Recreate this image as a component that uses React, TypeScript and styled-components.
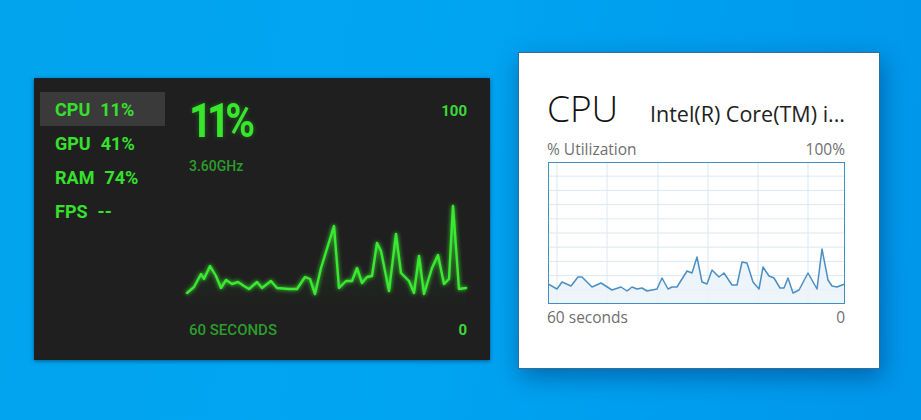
import React from "react";
import styled, { createGlobalStyle } from "styled-components";

const Global = createGlobalStyle`
  html, body { margin: 0; padding: 0; }
  body {
    width: 921px;
    height: 420px;
    overflow: hidden;
    background: linear-gradient(100deg, #03a4ee 0%, #00a5f1 45%, #0096ea 100%);
  }
  #root { height: 420px; }
`;

const Desktop = styled.div`
  display: flex;
  align-items: flex-start;
  gap: 28px;
  padding: 52px 0 0 34px;
  height: 420px;
  box-sizing: border-box;
`;

/* ---------- Dark (Razer-like) overlay ---------- */

const DarkPanel = styled.div`
  margin-top: 26px;
  width: 456px;
  height: 282px;
  background: #1f1f1f;
  box-shadow: 0 1px 4px rgba(0, 30, 60, 0.55);
  border-top: 1px solid #0f2733;
  box-sizing: border-box;
  display: flex;
  font-family: Roboto, "Liberation Sans", sans-serif;
  font-weight: 700;
`;

const Sidebar = styled.div`
  width: 154px;
  padding: 13px 0 0 6px;
  box-sizing: border-box;
  display: flex;
  flex-direction: column;
`;

const StatRow = styled.div<{ $active?: boolean }>`
  width: 125px;
  height: 34px;
  padding-left: 15px;
  box-sizing: border-box;
  display: flex;
  align-items: center;
  gap: 10px;
  font-size: 18px;
  color: #36e02c;
  background: ${(p) => (p.$active ? "#3a3a3a" : "transparent")};
`;

const Main = styled.div`
  flex: 1;
  padding: 18px 23px 0 2px;
  display: flex;
  flex-direction: column;
`;

const SpreadRow = styled.div`
  display: flex;
  justify-content: space-between;
  align-items: flex-start;
`;

const BigValue = styled.div`
  font-size: 48px;
  line-height: 48px;
  letter-spacing: -6px;
  transform: scaleX(0.84);
  transform-origin: left center;
  color: #38e62c;
  text-shadow: 0 0 6px rgba(56, 230, 44, 0.35);
`;

const Scale = styled.div<{ $top?: number }>`
  margin-top: ${(p) => p.$top ?? 0}px;
  font-size: 15px;
  line-height: 16px;
  color: #3bd83a;
`;

const SubLabel = styled.div<{ $size: number; $top: number }>`
  margin-top: ${(p) => p.$top}px;
  font-size: ${(p) => p.$size}px;
  line-height: 16px;
  font-weight: 500;
  color: #2c9d2c;
`;

const GreenChart = styled.svg`
  display: block;
  margin: 22px 0 0 -2px;
  width: 280px;
  height: 110px;
  overflow: visible;
`;

const DarkFooter = styled(SpreadRow)`
  margin-top: 16px;
  align-items: center;
`;

/* ---------- Task manager panel ---------- */

const WhitePanel = styled.div`
  width: 362px;
  height: 317px;
  background: #ffffff;
  border: 1px solid #2f6f98;
  box-sizing: border-box;
  box-shadow: 2px 8px 22px rgba(0, 40, 100, 0.45);
  padding: 36px 34px 0 28px;
  display: flex;
  flex-direction: column;
  font-family: "Open Sans", "Noto Sans", sans-serif;
`;

const TitleRow = styled.div`
  display: flex;
  align-items: baseline;
  justify-content: space-between;
  white-space: nowrap;
`;

const Title = styled.div`
  font-size: 37px;
  line-height: 37px;
  font-weight: 300;
  color: #111;
`;

const Subtitle = styled.div`
  font-size: 21.5px;
  color: #222;
`;

const MetaRow = styled.div<{ $top: number; $size: number }>`
  display: flex;
  justify-content: space-between;
  margin-top: ${(p) => p.$top}px;
  font-size: ${(p) => p.$size}px;
  line-height: 18px;
  color: #6f6f6f;
`;

const BlueChart = styled.svg`
  display: block;
  margin-top: 4px;
  width: 297px;
  height: 142px;
  margin-left: 1px;
`;

const greenPts: [number, number][] = [
  [188, 292], [195, 286], [202, 273], [205, 278], [211, 265], [217, 275], [222, 287],
  [227, 279], [233, 283], [239, 281], [245, 285], [250, 288], [258, 281], [263, 287],
  [272, 280], [278, 287], [290, 288], [298, 288], [306, 276], [311, 278], [316, 293],
  [322, 267], [335, 225], [340, 287], [347, 280], [353, 280], [358, 267], [363, 282],
  [368, 276], [373, 275], [378, 242], [382, 250], [390, 290], [397, 233], [402, 272],
  [410, 280], [415, 292], [420, 255], [425, 293], [433, 267], [439, 254], [445, 283],
  [450, 278], [454, 205], [460, 288], [467, 287],
];

const bluePts: [number, number][] = [
  [549, 284], [558, 289], [563, 282], [572, 286], [579, 277], [583, 277], [593, 287],
  [602, 283], [613, 290], [622, 287], [628, 291], [633, 287], [638, 289], [643, 288],
  [648, 291], [658, 289], [663, 278], [669, 289], [673, 287], [678, 287], [688, 271],
  [693, 273], [698, 257], [703, 282], [708, 284], [713, 270], [720, 277], [725, 273],
  [733, 285], [738, 285], [743, 262], [748, 263], [754, 282], [760, 289], [764, 267],
  [770, 276], [775, 278], [781, 288], [785, 288], [789, 278], [794, 293], [800, 290],
  [809, 273], [818, 289], [823, 249], [829, 280], [833, 286], [838, 287], [843, 285],
  [846, 284],
];

const toPath = (pts: [number, number][]) =>
  pts.map(([x, y], i) => `${i ? "L" : "M"}${x} ${y}`).join(" ");

const stats = [
  { label: "CPU", value: "11%", active: true },
  { label: "GPU", value: "41%" },
  { label: "RAM", value: "74%" },
  { label: "FPS", value: "--" },
];

export default function App() {
  const gLine = toPath(greenPts);
  const bLine = toPath(bluePts);
  const bArea = `${bLine} L846 304 L549 304 Z`;
  const vLines = [558, 608, 659, 709, 759, 809];
  const hLines = Array.from({ length: 9 }, (_, i) => 162 + (142 / 10) * (i + 1));

  return (
    <>
      <Global />
      <Desktop>
        <DarkPanel>
          <Sidebar>
            {stats.map((s) => (
              <StatRow key={s.label} $active={s.active}>
                <span>{s.label}</span>
                <span>{s.value}</span>
              </StatRow>
            ))}
          </Sidebar>
          <Main>
            <SpreadRow>
              <BigValue>11%</BigValue>
              <Scale $top={6}>100</Scale>
            </SpreadRow>
            <SubLabel $size={14} $top={13}>3.60GHz</SubLabel>
            <GreenChart viewBox="188 195 280 110">
              <defs>
                <filter id="glow" x="-10%" y="-30%" width="120%" height="160%">
                  <feGaussianBlur stdDeviation="2.2" result="b" />
                  <feMerge>
                    <feMergeNode in="b" />
                    <feMergeNode in="SourceGraphic" />
                  </feMerge>
                </filter>
                <linearGradient id="gfill" x1="0" y1="0" x2="0" y2="1">
                  <stop offset="0" stopColor="#2fd82a" stopOpacity="0.14" />
                  <stop offset="1" stopColor="#2fd82a" stopOpacity="0" />
                </linearGradient>
              </defs>
              <path d={`${gLine} L467 305 L188 305 Z`} fill="url(#gfill)" />
              <path
                d={gLine}
                fill="none"
                stroke="#3ae830"
                strokeWidth={2.4}
                strokeLinejoin="round"
                strokeLinecap="round"
                filter="url(#glow)"
              />
            </GreenChart>
            <DarkFooter>
              <SubLabel $size={15} $top={0}>60 SECONDS</SubLabel>
              <Scale>0</Scale>
            </DarkFooter>
          </Main>
        </DarkPanel>

        <WhitePanel>
          <TitleRow>
            <Title>CPU</Title>
            <Subtitle>Intel(R) Core(TM) i...</Subtitle>
          </TitleRow>
          <MetaRow $top={12} $size={15.5}>
            <span>% Utilization</span>
            <span>100%</span>
          </MetaRow>
          <BlueChart viewBox="549 162 297 142">
            <rect x={549} y={162} width={297} height={142} fill="#fff" />
            {hLines.map((y) => (
              <line key={y} x1={549} x2={846} y1={y} y2={y} stroke="#dbe9f3" strokeWidth={1} />
            ))}
            {vLines.map((x) => (
              <line key={x} x1={x} x2={x} y1={162} y2={304} stroke="#dbe9f3" strokeWidth={1} />
            ))}
            <path d={bArea} fill="#eaf2f9" opacity={0.85} />
            <path d={bLine} fill="none" stroke="#4a8fc4" strokeWidth={1.5} strokeLinejoin="round" />
            <rect x={549.5} y={162.5} width={296} height={141} fill="none" stroke="#3f8fc6" strokeWidth={1} />
          </BlueChart>
          <MetaRow $top={4} $size={15.5}>
            <span>60 seconds</span>
            <span>0</span>
          </MetaRow>
        </WhitePanel>
      </Desktop>
    </>
  );
}
